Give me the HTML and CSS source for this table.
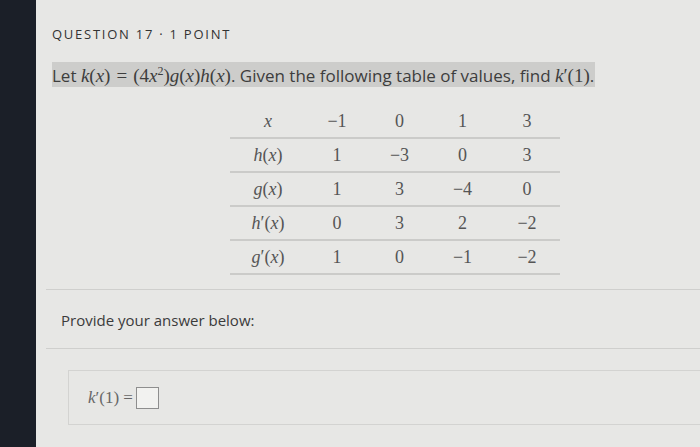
FILE: index.html
```html
<!DOCTYPE html>
<html>
<head>
<meta charset="utf-8">
<link rel="stylesheet" href="styles.css">
</head>
<body>
<div class="page">
  <div class="sidebar"></div>
  <div class="main">
    <div class="qhead">QUESTION 17 · 1 POINT</div>
    <div class="prompt"><span class="hl">Let <span class="m">k</span><span class="r">(</span><span class="m">x</span><span class="r">)</span><span class="r eq">=</span><span class="r">(4</span><span class="m">x</span><sup class="r">2</sup><span class="r">)</span><span class="m">g</span><span class="r">(</span><span class="m">x</span><span class="r">)</span><span class="m">h</span><span class="r">(</span><span class="m">x</span><span class="r">)</span>. Given the following table of values, find <span class="m">k</span><span class="r">′(1)</span>.</span></div>
    <table class="vals">
      <tr><td><span class="m">x</span></td><td>−1</td><td>0</td><td>1</td><td>3</td></tr>
      <tr><td><span class="m">h</span>(<span class="m">x</span>)</td><td>1</td><td>−3</td><td>0</td><td>3</td></tr>
      <tr><td><span class="m">g</span>(<span class="m">x</span>)</td><td>1</td><td>3</td><td>−4</td><td>0</td></tr>
      <tr><td><span class="m">h</span>′(<span class="m">x</span>)</td><td>0</td><td>3</td><td>2</td><td>−2</td></tr>
      <tr><td><span class="m">g</span>′(<span class="m">x</span>)</td><td>1</td><td>0</td><td>−1</td><td>−2</td></tr>
    </table>
    <div class="divider"></div>
    <div class="provide">Provide your answer below:</div>
    <div class="divider second"></div>
    <div class="answer">
      <span class="ans-label"><span class="m">k</span>′(1) =</span><span class="ans-box"></span>
    </div>
  </div>
</div>
</body>
</html>
```
FILE: styles.css
```css
html, body {
  margin: 0;
  padding: 0;
  width: 700px;
  height: 447px;
  overflow: hidden;
  background: #e7e7e5;
}
.page {
  display: flex;
  height: 447px;
}
.sidebar {
  width: 36px;
  flex: none;
  background: #1b1f28;
}
.main {
  flex: 1;
  padding-left: 16px;
  font-family: "Open Sans", "Liberation Sans", sans-serif;
  color: #3a3a3a;
}
.qhead {
  margin-top: 25px;
  font-size: 13px;
  line-height: 18px;
  letter-spacing: 1.75px;
  color: #333;
}
.prompt {
  margin-top: 19px;
  font-size: 17px;
  line-height: 27px;
  color: #3d3d3d;
}
.hl {
  background: #cdcdcb;
  padding: 2px 1px 0 0;
}
.m {
  font-family: "Liberation Serif", serif;
  font-style: italic;
  font-size: 19px;
}
.r {
  font-family: "Liberation Serif", serif;
  font-size: 19px;
}
.r.eq {
  margin: 0 6px;
}
sup.r {
  font-size: 12px;
  vertical-align: 7px;
  line-height: 0;
}
.vals {
  margin-top: 16px;
  margin-left: 178px;
  border-collapse: collapse;
  font-family: "Liberation Serif", serif;
  font-size: 18px;
  color: #555;
}
.vals td {
  height: 32px;
  padding: 0;
  text-align: center;
  border-bottom: 2px solid #cbcbc9;
}
.vals td:nth-child(1) { width: 76px; }
.vals td:nth-child(2) { width: 62px; }
.vals td:nth-child(3) { width: 63px; }
.vals td:nth-child(4) { width: 63px; }
.vals td:nth-child(5) { width: 66px; }
.vals .m { font-size: 18px; }
.divider {
  margin-top: 14px;
  margin-left: -6px;
  height: 1px;
  background: #cfcfcd;
}
.divider.second {
  margin-top: 18px;
}
.provide {
  margin-top: 20px;
  margin-left: 9px;
  font-size: 15px;
  line-height: 20px;
  color: #3b3b3b;
}
.answer {
  margin-top: 21px;
  margin-left: 16px;
  height: 53px;
  border: 1px solid #d3d3d1;
  border-right: none;
  display: flex;
  align-items: center;
  padding-left: 19px;
}
.ans-label {
  font-family: "Liberation Serif", serif;
  font-size: 17px;
  color: #666;
}
.ans-label .m { font-size: 17px; }
.ans-box {
  display: inline-block;
  width: 21px;
  height: 20px;
  margin-left: 3px;
  border: 1px solid #8e8e8e;
  background: #f2f2f0;
}
```
